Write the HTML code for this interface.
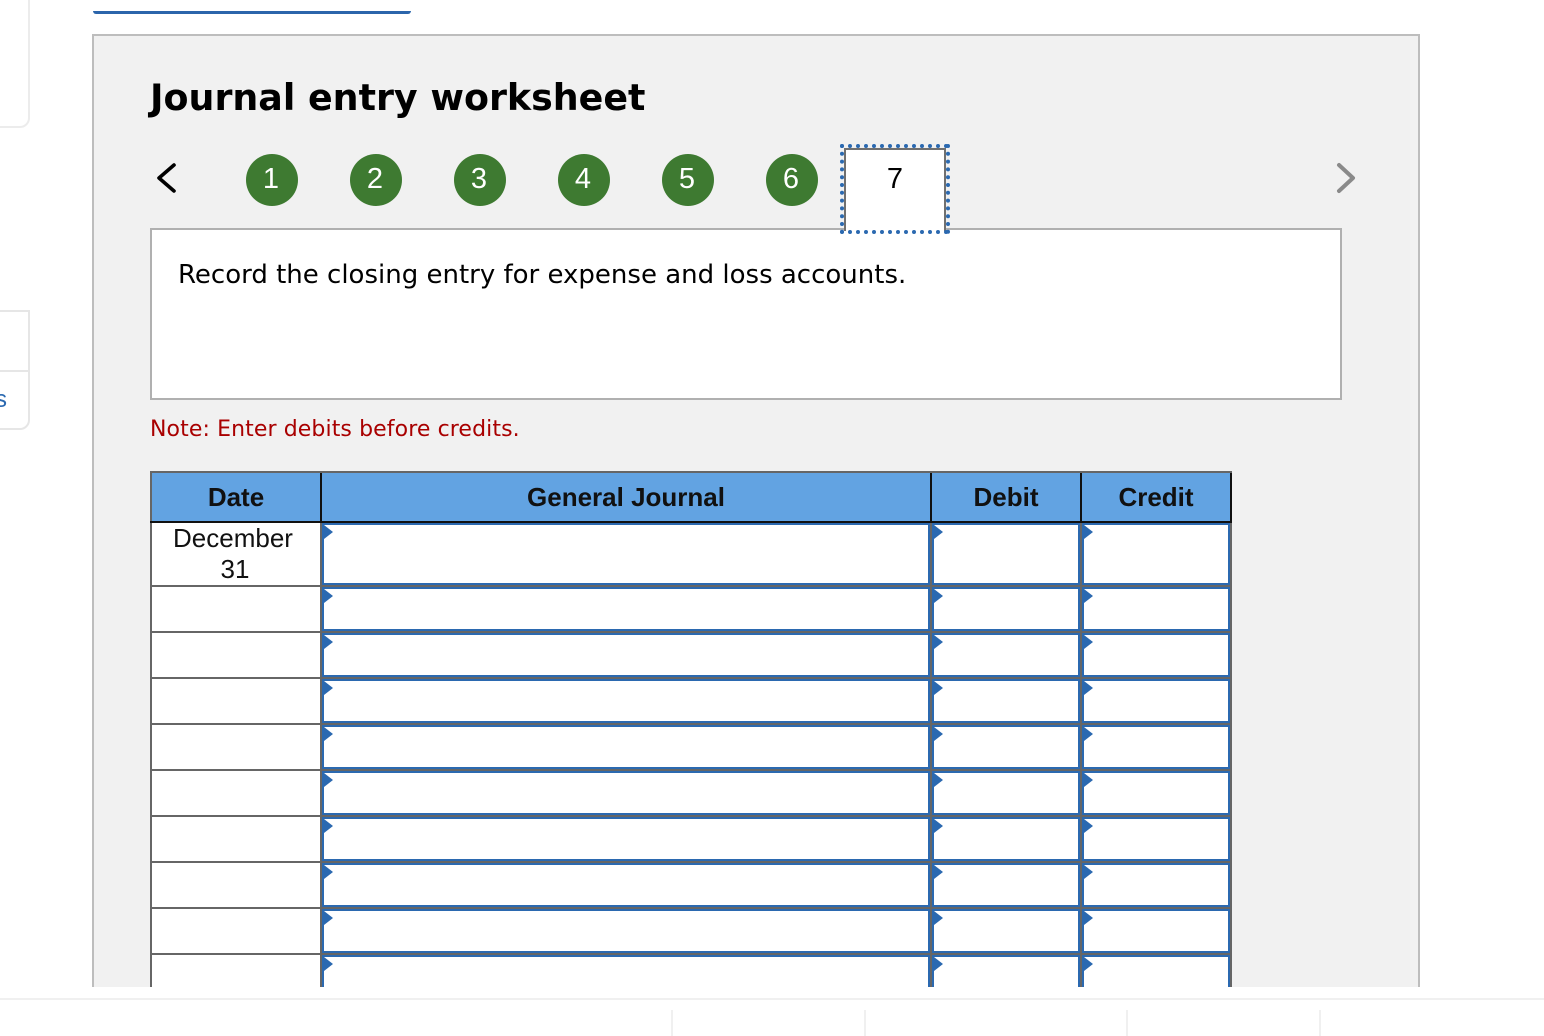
<!DOCTYPE html>
<html lang="en">
<head>
<meta charset="utf-8">
<title>Journal entry worksheet</title>
<style>
html,body{margin:0;padding:0;background:#fff;}
body{width:1544px;height:1036px;position:relative;overflow:hidden;font-family:"Liberation Sans",sans-serif;color:#111;}
.a{position:absolute;box-sizing:border-box;}
.t{position:absolute;white-space:nowrap;}
.v{font-family:"DejaVu Sans",sans-serif;}
.c{position:absolute;top:154px;width:52px;height:52px;border-radius:50%;background:#3e7a31;color:#fff;font-size:29px;line-height:51px;text-align:center;text-indent:-2px;}
.h{position:absolute;top:473px;height:48px;line-height:48px;text-align:center;font-weight:bold;font-size:26px;color:#111;}
.g{position:absolute;left:150px;width:1082px;height:2px;background:#666;}
.i{position:absolute;box-sizing:border-box;background:#fff;border:2px solid #2b69b0;}
.i::before{content:"";position:absolute;left:0;top:0;width:0;height:0;border-left:9px solid #2b69b0;border-top:7px solid transparent;border-bottom:7px solid transparent;}
.j{left:322px;width:608px;}
.d{left:932px;width:148px;}
.k{left:1082px;width:148px;}
.r1{top:523px;height:62px;}
.r2{top:587px;height:44px;}
.r3{top:633px;height:44px;}
.r4{top:679px;height:44px;}
.r5{top:725px;height:44px;}
.r6{top:771px;height:44px;}
.r7{top:817px;height:44px;}
.r8{top:863px;height:44px;}
.r9{top:909px;height:44px;}
.r10{top:955px;height:44px;}
</style>
</head>
<body>
<!-- left sidebar remnants -->
<div class="a" style="left:-20px;top:-20px;width:50px;height:148px;border:2px solid #ececec;border-radius:0 0 10px 0;"></div>
<div class="a" style="left:-20px;top:310px;width:50px;height:120px;border:2px solid #e6e6e6;border-radius:0 0 10px 0;"></div>
<div class="a" style="left:0;top:370px;width:28px;height:2px;background:#e6e6e6;"></div>
<div class="t" style="left:-5px;top:386px;font-size:24px;line-height:28px;color:#2b69b0;">s</div>

<!-- top blue bar -->
<div class="a" style="left:93px;top:11px;width:318px;height:3px;background:#2b65ab;border-radius:0 0 3px 3px;"></div>

<!-- panel -->
<div class="a" style="left:92px;top:34px;width:1328px;height:953px;background:#f1f1f1;border:2px solid #bdbdbd;border-bottom:0;"></div>

<div class="t v" style="left:150px;top:76px;font-size:36.4px;line-height:44px;font-weight:bold;color:#000;">Journal entry worksheet</div>

<svg class="a" style="left:0;top:0;" width="1544" height="240">
<polyline points="174,165 159,178 174,191" fill="none" stroke="#000" stroke-width="3.6" stroke-linecap="round" stroke-linejoin="round"/>
<polyline points="1339,165 1353,178 1339,191" fill="none" stroke="#8a8a8a" stroke-width="4" stroke-linecap="round" stroke-linejoin="round"/>
</svg>

<div class="c" style="left:246px;">1</div>
<div class="c" style="left:350px;">2</div>
<div class="c" style="left:454px;">3</div>
<div class="c" style="left:558px;">4</div>
<div class="c" style="left:662px;">5</div>
<div class="c" style="left:766px;">6</div>

<!-- instruction box -->
<div class="a" style="left:150px;top:228px;width:1192px;height:172px;background:#fff;border:2px solid #b0b0b0;"></div>
<div class="t v" style="left:178px;top:259px;font-size:26px;line-height:32px;color:#000;">Record the closing entry for expense and loss accounts.</div>

<!-- active tab -->
<div class="a" style="left:844px;top:148px;width:102px;height:83px;background:#fff;border:2px solid #707070;border-bottom:0;"></div>
<div class="t" style="left:844px;top:148px;width:102px;text-align:center;font-size:29px;line-height:63px;color:#000;">7</div>
<svg class="a" style="left:836px;top:140px;" width="120" height="100">
<g fill="none" stroke="#2b69b0" stroke-width="4" stroke-linecap="round" stroke-dasharray="0 8">
<line x1="6" y1="6" x2="112" y2="6"/>
<line x1="6" y1="92" x2="112" y2="92"/>
<line x1="6" y1="6" x2="6" y2="92" stroke-dasharray="0 7.8"/>
<line x1="112" y1="6" x2="112" y2="92" stroke-dasharray="0 7.8"/>
</g>
</svg>

<div class="t v" style="left:150px;top:415px;font-size:22px;letter-spacing:0.1px;line-height:30px;color:#a90000;">Note: Enter debits before credits.</div>

<!-- table, clipped at y=987 -->
<div class="a" style="left:0;top:0;width:1544px;height:987px;overflow:hidden;">
  <div class="a" style="left:150px;top:471px;width:1082px;height:520px;background:#fff;"></div>
  <div class="a" style="left:150px;top:471px;width:1082px;height:52px;background:#62a3e2;"></div>
  <div class="h" style="left:152px;width:168px;">Date</div>
  <div class="h" style="left:322px;width:608px;">General Journal</div>
  <div class="h" style="left:932px;width:148px;">Debit</div>
  <div class="h" style="left:1082px;width:148px;">Credit</div>

  <div class="a" style="left:150px;top:471px;width:1082px;height:2px;background:#666;"></div>
  <div class="a" style="left:150px;top:521px;width:1082px;height:2px;background:#111;"></div>
  <div class="a" style="left:150px;top:471px;width:2px;height:50px;background:#666;"></div>
  <div class="a" style="left:320px;top:473px;width:2px;height:50px;background:#111;"></div>
  <div class="a" style="left:930px;top:473px;width:2px;height:50px;background:#111;"></div>
  <div class="a" style="left:1080px;top:473px;width:2px;height:50px;background:#111;"></div>
  <div class="a" style="left:1230px;top:473px;width:2px;height:50px;background:#111;"></div>

  <div class="t" style="left:152px;top:523px;width:162px;text-align:center;font-size:26px;line-height:31px;">December</div>
  <div class="t" style="left:152px;top:554px;width:166px;text-align:center;font-size:26px;line-height:31px;">31</div>

  <div class="i j r1"></div><div class="i d r1"></div><div class="i k r1"></div>
  <div class="i j r2"></div><div class="i d r2"></div><div class="i k r2"></div>
  <div class="i j r3"></div><div class="i d r3"></div><div class="i k r3"></div>
  <div class="i j r4"></div><div class="i d r4"></div><div class="i k r4"></div>
  <div class="i j r5"></div><div class="i d r5"></div><div class="i k r5"></div>
  <div class="i j r6"></div><div class="i d r6"></div><div class="i k r6"></div>
  <div class="i j r7"></div><div class="i d r7"></div><div class="i k r7"></div>
  <div class="i j r8"></div><div class="i d r8"></div><div class="i k r8"></div>
  <div class="i j r9"></div><div class="i d r9"></div><div class="i k r9"></div>
  <div class="i j r10"></div><div class="i d r10"></div><div class="i k r10"></div>

  <div class="g" style="top:585px;"></div>
  <div class="g" style="top:631px;"></div>
  <div class="g" style="top:677px;"></div>
  <div class="g" style="top:723px;"></div>
  <div class="g" style="top:769px;"></div>
  <div class="g" style="top:815px;"></div>
  <div class="g" style="top:861px;"></div>
  <div class="g" style="top:907px;"></div>
  <div class="g" style="top:953px;"></div>

  <div class="a" style="left:150px;top:523px;width:2px;height:470px;background:#666;"></div>
  <div class="a" style="left:320px;top:523px;width:2px;height:470px;background:#666;"></div>
  <div class="a" style="left:930px;top:523px;width:2px;height:470px;background:#666;"></div>
  <div class="a" style="left:1080px;top:523px;width:2px;height:470px;background:#666;"></div>
  <div class="a" style="left:1230px;top:523px;width:2px;height:470px;background:#666;"></div>
</div>

<!-- footer -->
<div class="a" style="left:0;top:998px;width:1544px;height:2px;background:#f0f0f0;"></div>
<div class="a" style="left:671px;top:1010px;width:2px;height:26px;background:#f0f0f0;"></div>
<div class="a" style="left:864px;top:1010px;width:2px;height:26px;background:#f0f0f0;"></div>
<div class="a" style="left:1126px;top:1010px;width:2px;height:26px;background:#f0f0f0;"></div>
<div class="a" style="left:1319px;top:1010px;width:2px;height:26px;background:#f0f0f0;"></div>
</body>
</html>
